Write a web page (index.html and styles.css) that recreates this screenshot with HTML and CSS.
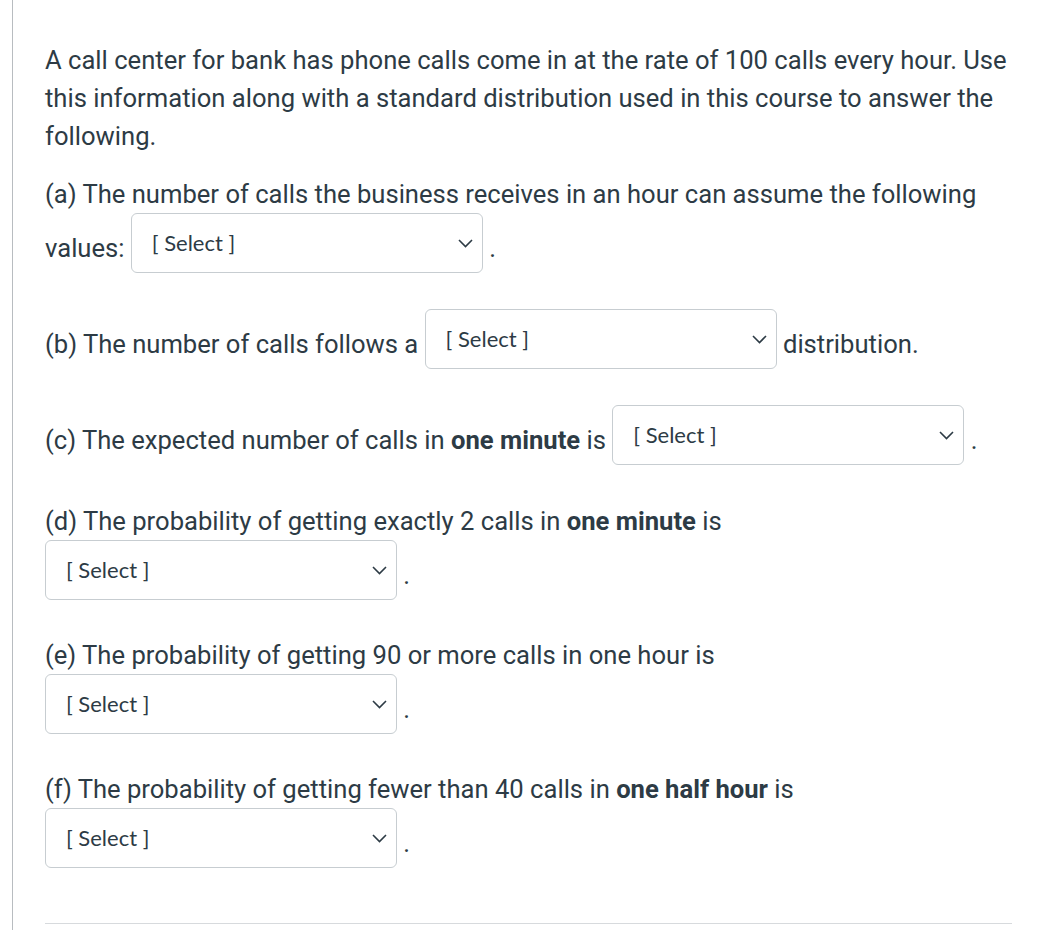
FILE: index.html
```html
<!DOCTYPE html>
<html>
<head>
<meta charset="utf-8">
<link rel="stylesheet" href="styles.css">
</head>
<body>
<div class="page">
  <p class="intro">A call center for bank has phone calls come in at the rate of 100 calls every hour. Use this information along with a standard distribution used in this course to answer the following.</p>

  <p class="q">(a) The number of calls the business receives in an hour can assume the following values: <span class="sel"><span class="sel-text">[ Select ]</span><svg class="chev" width="15" height="9" viewBox="0 0 15 9"><polyline points="1,1 7.5,7.5 14,1" fill="none" stroke="#2d3b45" stroke-width="1.6"/></svg></span> .</p>

  <p class="q">(b) The number of calls follows a <span class="sel"><span class="sel-text">[ Select ]</span><svg class="chev" width="15" height="9" viewBox="0 0 15 9"><polyline points="1,1 7.5,7.5 14,1" fill="none" stroke="#2d3b45" stroke-width="1.6"/></svg></span> distribution.</p>

  <p class="q q-c">(c) The expected number of calls in <b>one minute</b> is <span class="sel"><span class="sel-text">[ Select ]</span><svg class="chev" width="15" height="9" viewBox="0 0 15 9"><polyline points="1,1 7.5,7.5 14,1" fill="none" stroke="#2d3b45" stroke-width="1.6"/></svg></span> .</p>

  <p class="q">(d) The probability of getting exactly 2 calls in <b>one minute</b> is<br><span class="sel"><span class="sel-text">[ Select ]</span><svg class="chev" width="15" height="9" viewBox="0 0 15 9"><polyline points="1,1 7.5,7.5 14,1" fill="none" stroke="#2d3b45" stroke-width="1.6"/></svg></span> .</p>

  <p class="q">(e) The probability of getting 90 or more calls in one hour is<br><span class="sel"><span class="sel-text">[ Select ]</span><svg class="chev" width="15" height="9" viewBox="0 0 15 9"><polyline points="1,1 7.5,7.5 14,1" fill="none" stroke="#2d3b45" stroke-width="1.6"/></svg></span> .</p>

  <p class="q">(f) The probability of getting fewer than 40 calls in <b>one half hour</b> is<br><span class="sel"><span class="sel-text">[ Select ]</span><svg class="chev" width="15" height="9" viewBox="0 0 15 9"><polyline points="1,1 7.5,7.5 14,1" fill="none" stroke="#2d3b45" stroke-width="1.6"/></svg></span> .</p>

  <hr class="rule">
</div>
</body>
</html>
```
FILE: styles.css
```css
html, body {
  margin: 0;
  padding: 0;
  background: #ffffff;
}

body {
  font-family: Roboto, "Liberation Sans", Arial, sans-serif;
  font-size: 25.6px;
  line-height: 38px;
  color: #2d3b45;
}

.page {
  margin-left: 12px;
  border-left: 1px solid #b8bcc0;
  padding: 41px 28px 0 32px;
  min-height: 930px;
  box-sizing: border-box;
}

p {
  margin: 0;
}

.intro {
  margin-bottom: 20px;
}

.q {
  margin-bottom: 36px;
}

.q-c {
  margin-bottom: 37px;
}

b {
  font-weight: 700;
}

.sel {
  display: inline-flex;
  align-items: center;
  justify-content: space-between;
  box-sizing: border-box;
  width: 352px;
  height: 60px;
  border: 1px solid #c7cdd1;
  border-radius: 6px;
  padding: 0 9px 0 20px;
  vertical-align: 6px;
  background: #ffffff;
}

.sel-text {
  font-family: Lato, "Liberation Sans", sans-serif;
  font-size: 22px;
  line-height: 24px;
  color: #2d3b45;
}

.chev {
  display: block;
  flex: none;
}

.rule {
  margin: 55px 0 0 0;
  border: 0;
  border-top: 1px solid #d7dadd;
  height: 0;
}
```
